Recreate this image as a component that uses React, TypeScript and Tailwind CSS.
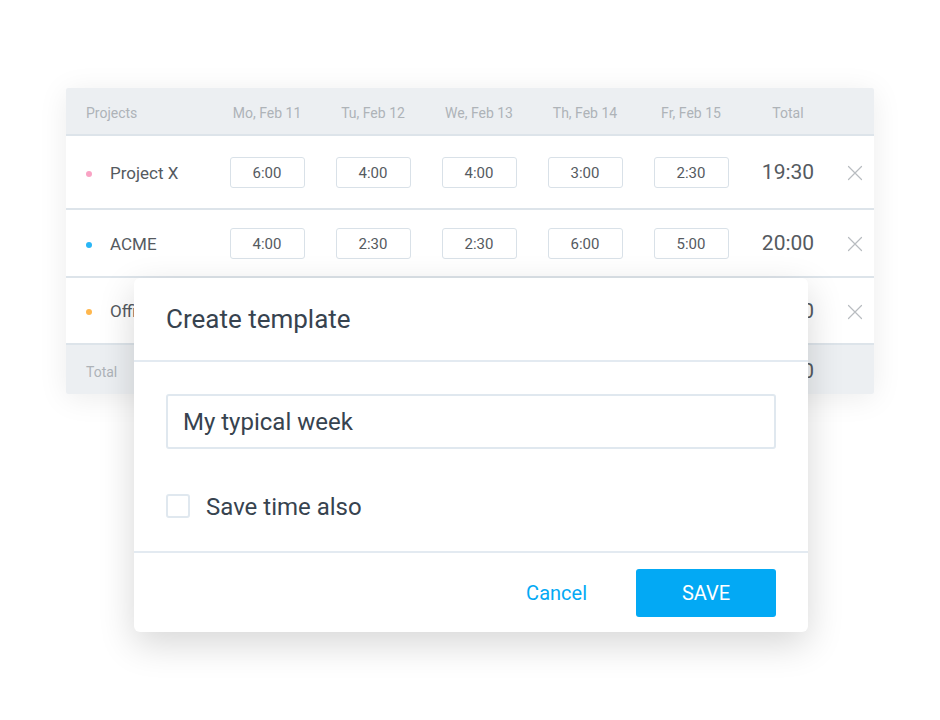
import React from "react";

const days = ["Mo, Feb 11", "Tu, Feb 12", "We, Feb 13", "Th, Feb 14", "Fr, Feb 15"];

const rows = [
  { name: "Project X", dot: "bg-[#f9a3c4]", vals: ["6:00", "4:00", "4:00", "3:00", "2:30"], total: "19:30", h: "h-[74px]" },
  { name: "ACME", dot: "bg-[#29b6f6]", vals: ["4:00", "2:30", "2:30", "6:00", "5:00"], total: "20:00", h: "h-[68px]" },
  { name: "Office", dot: "bg-[#ffb74d]", vals: ["2:00", "2:00", "2:00", "2:00", "2:00"], total: "10:00", h: "h-[67px]" },
];

function XIcon() {
  return (
    <svg width="16" height="16" viewBox="0 0 16 16" fill="none" stroke="#b8bcc0" strokeWidth="1.2" strokeLinecap="round">
      <path d="M1.5 1.5 L14.5 14.5 M14.5 1.5 L1.5 14.5" />
    </svg>
  );
}

const grid = "grid grid-cols-[148px_repeat(5,106px)_88px_1fr] items-center";

export default function App() {
  return (
    <div className="relative w-[940px] h-[720px] bg-white overflow-hidden" style={{ fontFamily: "Roboto, 'Liberation Sans', sans-serif" }}>
      <div className="pt-[88px] pl-[66px]">
        <div className="w-[808px] bg-white rounded-[2px] shadow-[0_4px_30px_rgba(0,0,0,0.08)] overflow-hidden">
          <div className={`${grid} h-[48px] pt-[5px] bg-[#eceff2] border-b-2 border-[#dde4ea] text-[14px] text-[#aeb3b8]`}>
            <div className="pl-[20px]">Projects</div>
            {days.map((d) => (
              <div key={d} className="text-center">{d}</div>
            ))}
            <div className="text-center">Total</div>
            <div />
          </div>
          {rows.map((r) => (
            <div key={r.name} className={`${grid} ${r.h} border-b-2 border-[#dde4ea]`}>
              <div className="flex items-center pl-[20px] pt-[3px]">
                <span className={`w-[6px] h-[6px] rounded-full ${r.dot}`} />
                <span className="ml-[18px] text-[17px] text-[#555a5f]">{r.name}</span>
              </div>
              {r.vals.map((v, i) => (
                <div key={i} className="flex justify-center">
                  <div className="w-[75px] h-[31px] pt-[3px] border border-[#d9e1e8] rounded-[3px] flex items-center justify-center text-[15px] text-[#555a5f]">
                    {v}
                  </div>
                </div>
              ))}
              <div className="text-center text-[21px] text-[#555a5f] pt-[2px]">{r.total}</div>
              <div className="flex justify-center pl-[4px] pt-[2px]">
                <XIcon />
              </div>
            </div>
          ))}
          <div className={`${grid} h-[49px] pt-[5px] bg-[#eceff2] text-[14px] text-[#aeb3b8]`}>
            <div className="pl-[20px]">Total</div>
            <div />
            <div />
            <div />
            <div />
            <div />
            <div className="text-center text-[21px] text-[#555a5f]">49:30</div>
            <div />
          </div>
        </div>
      </div>

      <div className="absolute left-[134px] top-[278px] w-[674px] bg-white rounded-[6px] shadow-[0_12px_36px_rgba(0,0,0,0.16)]">
        <div className="h-[84px] flex items-center pl-[32px] border-b-2 border-[#e3eaf1]">
          <span className="text-[26px] text-[#37434f]">Create template</span>
        </div>
        <div className="px-[32px] pt-[32px] pb-[33px]">
          <div className="h-[55px] border-2 border-[#e0e8ef] rounded-[3px] flex items-center pl-[15px] text-[24px] text-[#37434f]">
            My typical week
          </div>
          <div className="flex items-center mt-[45px] h-[24px]">
            <div className="w-[24px] h-[24px] border-2 border-[#e0e8ef] rounded-[3px]" />
            <span className="ml-[16px] text-[24px] text-[#37434f] pt-[2px]">Save time also</span>
          </div>
        </div>
        <div className="border-t-2 border-[#e3eaf1] h-[81px] flex items-center justify-end pr-[32px]">
          <span className="text-[20px] text-[#03a9f4] mr-[49px]">Cancel</span>
          <div className="w-[140px] h-[48px] bg-[#03a9f4] rounded-[3px] flex items-center justify-center text-[20px] text-white">
            SAVE
          </div>
        </div>
      </div>
    </div>
  );
}
